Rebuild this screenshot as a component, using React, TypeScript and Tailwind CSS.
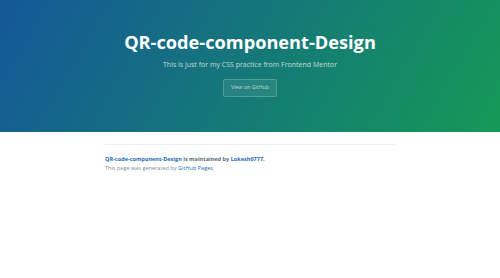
const App = () => {
  return (
    <div className="w-[500px] h-[278px] bg-white font-['Open_Sans',sans-serif]">
      <section className="h-[132px] flex flex-col items-center pt-[30px] text-white bg-[linear-gradient(120deg,#155799,#159957)]">
        <h1 className="text-[18.2px] leading-[25px] font-bold">QR-code-component-Design</h1>
        <h2 className="mt-[5px] text-[7px] leading-[10px] opacity-70">
          This is just for my CSS practice from Frontend Mentor
        </h2>
        <a
          href="#"
          className="mt-[9px] h-[18px] px-[7px] flex items-center text-[5.3px] text-white/70 bg-white/[0.08] border border-white/20 rounded-[2px]"
        >
          View on GitHub
        </a>
      </section>
      <main className="px-[105px] pt-[12px]">
        <footer className="border-t border-[#eff0f1] pt-[10px] text-[5.55px] leading-[9px]">
          <p className="font-bold text-[#606c71]">
            <a href="#" className="text-[#1e6bb8]">QR-code-component-Design</a> is maintained by{" "}
            <a href="#" className="text-[#1e6bb8]">Lokesh0777</a>.
          </p>
          <p className="text-[#819198]">
            This page was generated by <a href="#" className="text-[#1e6bb8]">GitHub Pages</a>.
          </p>
        </footer>
      </main>
    </div>
  );
};

export default App;
